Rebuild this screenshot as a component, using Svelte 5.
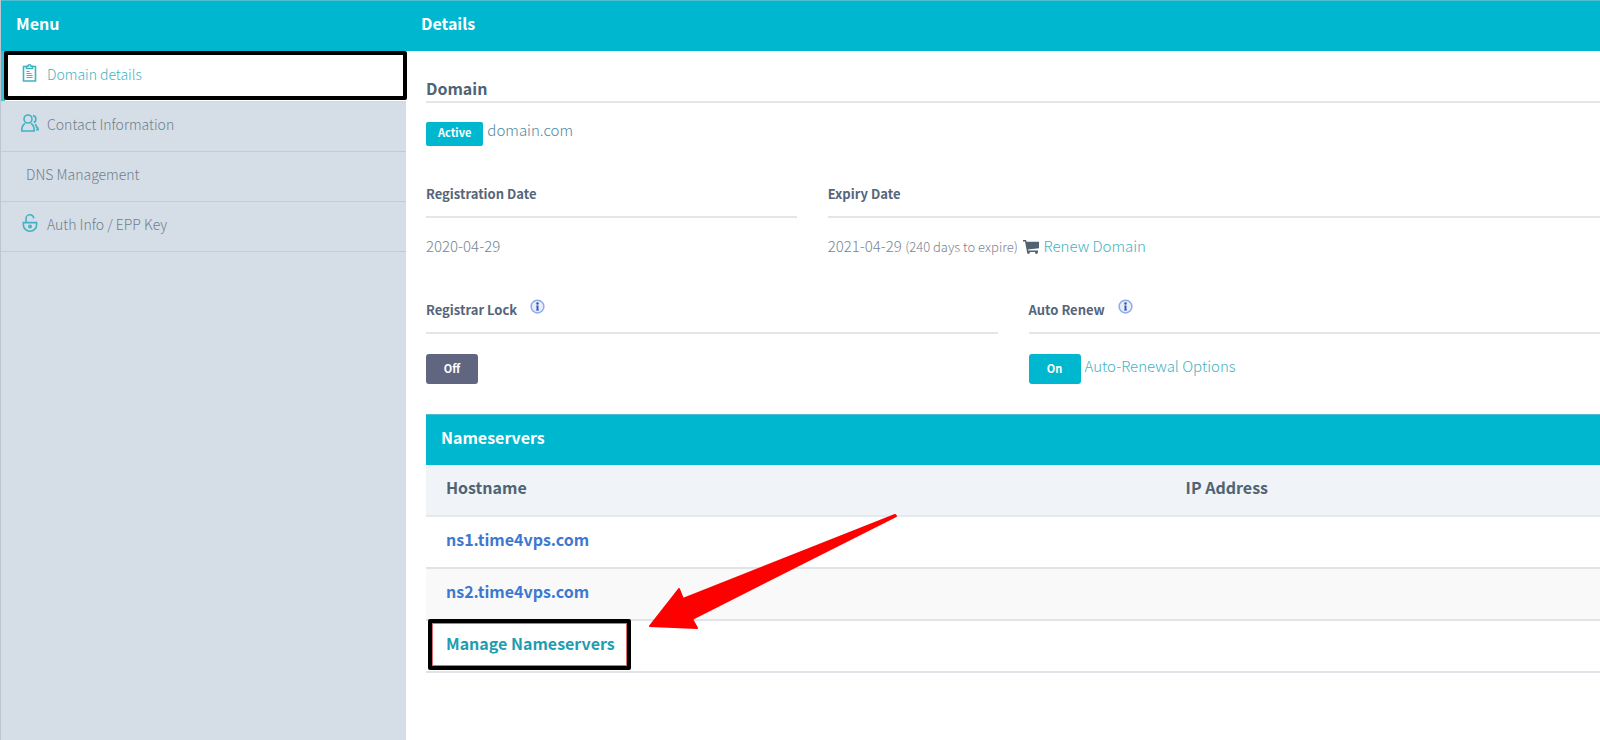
<script>
  let menu = [
    { label: 'Domain details', icon: 'clipboard', active: true },
    { label: 'Contact Information', icon: 'people' },
    { label: 'DNS Management' },
    { label: 'Auth Info / EPP Key', icon: 'lock' },
  ];

  let domain = 'domain.com';
  let registered = '2020-04-29';
  let expires = '2021-04-29';
  let daysLeft = 240;
  let registrarLock = false;
  let autoRenew = true;
  let nameservers = [
    { host: 'ns1.time4vps.com', ip: '' },
    { host: 'ns2.time4vps.com', ip: '' },
  ];
</script>

{#snippet info()}
  <svg class="info" viewBox="0 0 16 16" aria-hidden="true">
    <circle cx="8" cy="8" r="6.8" fill="#e9edf6" stroke="#8eaaea" stroke-width="1.6" />
    <circle cx="8" cy="4.8" r="1.3" fill="#2b4fc4" />
    <path d="M6.6 7H9v4.400h.6v.8H6.400v-.8H7V7.800h-.4z" fill="#2b4fc4" />
  </svg>
{/snippet}

<div class="page">
  <aside>
    <h2 class="bar">Menu</h2>
    <nav>
      {#each menu as item}
        <a href="#menu" class="item" class:active={item.active}>
          {#if item.icon}
            <svg class="icon" viewBox="0 0 18 18" aria-hidden="true">
              {#if item.icon === 'clipboard'}
                <path d="M5.500 2.500h-3v14.500h12v-14.500h-3" />
                <path d="M5.500 4.500v-2.200h1.500a1.500 1.500 0 0 1 3 0h1.500v2.200z" />
                <path d="M5.500 7.500h3M5.500 9.500h5M5.500 11.500h6M5.500 13.500h6" stroke-width="1.2" />
              {:else if item.icon === 'people'}
                <circle cx="7" cy="5" r="4" />
                <path d="M4.200 9.600C1.800 10.400.8 12 .8 17h12.400c0-4.600-1-6.600-3.400-7.400" />
                <path d="M12 1.600c3.600.4 3.800 5.800.6 7M14 10.200c1.600.8 1.400 2 1.600 3l1.400 1v1.400h-2" />
              {:else}
                <path d="M2.400 8.600h13.200v2.400a6.600 6.200 0 0 1-13.200 0z" />
                <path d="M5 8.600V5a3.900 3.900 0 0 1 7.800-.6" />
                <circle cx="9" cy="12.400" r="1.200" />
              {/if}
            </svg>
          {/if}
          <span>{item.label}</span>
        </a>
      {/each}
    </nav>
  </aside>

  <main>
    <h2 class="bar">Details</h2>
    <div class="content">
      <h3>Domain</h3>
      <p class="domain">
        <span class="badge">Active</span>
        <a href="#domain">{domain}</a>
      </p>

      <div class="thirds">
        <section>
          <h4>Registration Date</h4>
          <p>{registered}</p>
        </section>
        <section class="wide">
          <h4>Expiry Date</h4>
          <p>
            {expires} <small>({daysLeft} days to expire)</small>
            <svg class="cart" viewBox="0 0 16 14" aria-hidden="true">
              <path d="M0 0h3l.5 1.800H16v6.400L5 9.400l.2 1H15V12H4L2 1.600H0z" />
              <circle cx="5.400" cy="12.600" r="1.400" />
              <circle cx="13.400" cy="12.600" r="1.400" />
            </svg>
            <a href="#renew">Renew Domain</a>
          </p>
        </section>
      </div>

      <div class="halves">
        <section>
          <h4>Registrar Lock {@render info()}</h4>
          <div class="setting">
            <button class:on={registrarLock} on:click={() => (registrarLock = !registrarLock)}>
              {registrarLock ? 'On' : 'Off'}
            </button>
          </div>
        </section>
        <section>
          <h4>Auto Renew {@render info()}</h4>
          <div class="setting">
            <button class:on={autoRenew} on:click={() => (autoRenew = !autoRenew)}>
              {autoRenew ? 'On' : 'Off'}
            </button>
            <a href="#options">Auto-Renewal Options</a>
          </div>
        </section>
      </div>

      <div class="nameservers">
        <h2 class="bar">Nameservers</h2>
        <table>
          <thead>
            <tr><th class="host">Hostname</th><th>IP Address</th></tr>
          </thead>
          <tbody>
            {#each nameservers as ns}
              <tr><td>{ns.host}</td><td>{ns.ip}</td></tr>
            {/each}
            <tr>
              <td colspan="2"><a class="manage" href="#manage">Manage Nameservers</a></td>
            </tr>
          </tbody>
        </table>
        <svg class="arrow" viewBox="0 0 248 116" aria-hidden="true">
          <path d="M246 1L34 85 30 75 1 112l47 2-5-9L247 2z" />
        </svg>
      </div>
    </div>
  </main>
</div>

<style>
  :global(body) {
    background: #fff;
  }

  .page {
    display: flex;
    min-height: 100vh;
    overflow: hidden;
    box-sizing: border-box;
    font-family: 'Noto Sans CJK SC', 'Open Sans', sans-serif;
    font-size: 16px;
    font-weight: 300;
    line-height: 24px;
    color: #778495;
  }

  h2, h3, h4, p {
    margin: 0;
  }

  a {
    color: #45b2c2;
    text-decoration: none;
  }

  .bar {
    height: 51px;
    box-sizing: border-box;
    padding: 10px 15px 0;
    background: #00b7d0;
    border-top: 1px solid #4cc0d0;
    color: #fff;
    font-size: 16px;
    font-weight: 700;
    line-height: 24px;
  }

  aside {
    flex: 0 0 406px;
    box-sizing: border-box;
    background: #d5dde7;
    border-left: 1px solid #bcc6d2;
  }

  .item {
    display: flex;
    gap: 3px;
    height: 50px;
    box-sizing: border-box;
    padding: 10px 20px 0;
    border-bottom: 1px solid #c3ccd6;
    color: #6f7f8b;
    font-size: 14px;
  }

  .item span {
    padding: 0 5px;
  }

  .item.active {
    position: relative;
    height: 51px;
    padding-top: 11px;
    background: #fff;
    border-bottom-color: #d5d8dc;
    box-shadow: inset 4px 0 #3fc0d2;
    color: #45b2c2;
  }

  .item.active::after {
    content: '';
    position: absolute;
    inset: 0 -1px 1px 3px;
    border: 4px solid #000;
    border-radius: 2px;
  }

  .icon {
    width: 18px;
    height: 18px;
    margin-top: 2px;
    fill: none;
    stroke: #3fb3c4;
    stroke-width: 1.6;
  }

  main {
    flex: 1;
    min-width: 0;
  }

  .content {
    padding: 25px 0 0 20px;
  }

  h3 {
    padding-bottom: 1px;
    border-bottom: 2px solid #e1e6ea;
    color: #4f6372;
    font-size: 16px;
    font-weight: 700;
  }

  .domain {
    display: flex;
    gap: 4px;
    padding-top: 15px;
  }

  .domain a {
    color: #5088a2;
  }

  .badge {
    height: 24px;
    margin-top: 4px;
    padding: 0 12px;
    border-radius: 2px;
    background: #00b7d0;
    color: #fff;
    font-size: 11px;
    font-weight: 700;
    line-height: 20px;
  }

  .thirds, .halves {
    display: grid;
    column-gap: 31px;
  }

  .thirds {
    grid-template-columns: repeat(3, 1fr);
    padding-top: 36px;
  }

  .wide {
    grid-column: span 2;
  }

  .halves {
    grid-template-columns: 1fr 1fr;
    padding-top: 39px;
  }

  h4 {
    display: flex;
    gap: 13px;
    padding-bottom: 10px;
    border-bottom: 2px solid #e1e6ea;
    color: #56657a;
    font-size: 13px;
    font-weight: 700;
  }

  .info {
    width: 15px;
    height: 15px;
    margin-top: 1px;
  }

  section p {
    padding-top: 16px;
    font-size: 15px;
  }

  small {
    font-size: 13px;
  }

  .cart {
    width: 16px;
    height: 14px;
    margin: 0 1px 0 2px;
    fill: #4f6372;
    vertical-align: -2px;
  }

  .domain a, section a {
    font-size: 15px;
  }

  .setting {
    display: flex;
    gap: 4px;
    padding: 20px 0 30px;
  }

  button {
    width: 52px;
    height: 30px;
    padding: 0 0 3px;
    border: 0;
    border-radius: 3px;
    background: #60667f;
    color: #fff;
    font-family: inherit;
    font-size: 11px;
    font-weight: 700;
    line-height: 24px;
  }

  button.on {
    background: #00b7d0;
  }

  .nameservers {
    position: relative;
  }

  table {
    width: 100%;
    border-collapse: collapse;
    table-layout: fixed;
    font-size: 16px;
    font-weight: 700;
    color: #3d78d0;
  }

  .host {
    width: 63%;
  }

  th, td {
    height: 52px;
    padding: 0 20px 6px;
    box-sizing: border-box;
    border-bottom: 2px solid #e0e4e8;
    text-align: left;
  }

  th {
    height: 51px;
    background: #f0f3f8;
    border-bottom-color: #e6e8ec;
    color: #4f6372;
  }

  tbody tr:nth-child(2) {
    background: #f9f9f9;
  }

  .manage {
    position: relative;
    color: #1f9db0;
  }

  .manage::after {
    content: '';
    position: absolute;
    inset: -12px -16px -15px -18px;
    border: 4px solid #000;
    border-radius: 2px;
    box-shadow: inset 0 0 0 1px #e06a70;
  }

  .arrow {
    position: absolute;
    left: 223px;
    top: 100px;
    width: 248px;
    height: 116px;
    fill: #f00;
    stroke: #f00;
    stroke-width: 2;
    stroke-linejoin: round;
  }
</style>
